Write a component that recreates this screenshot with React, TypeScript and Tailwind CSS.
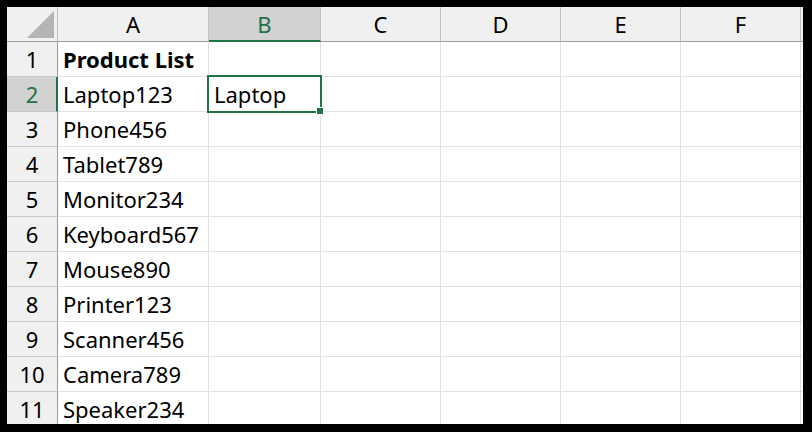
import clsx from "clsx";

const cn = clsx;

const columns = [
  { key: "A", width: "w-[151px]" },
  { key: "B", width: "w-[112px]" },
  { key: "C", width: "w-[120px]" },
  { key: "D", width: "w-[120px]" },
  { key: "E", width: "w-[120px]" },
  { key: "F", width: "w-[120px]" },
  // partly visible column past F, header text hidden by the frame
  { key: "G", width: "w-[120px]", hideLabel: true },
];

const rows: Record<string, string>[] = [
  { A: "Product List" },
  { A: "Laptop123", B: "Laptop" },
  { A: "Phone456" },
  { A: "Tablet789" },
  { A: "Monitor234" },
  { A: "Keyboard567" },
  { A: "Mouse890" },
  { A: "Printer123" },
  { A: "Scanner456" },
  { A: "Camera789" },
  { A: "Speaker234" },
];

const activeCol = "B";
const activeRow = 2;

export default function App() {
  return (
    <div className="w-[812px] h-[432px] bg-black pt-[7px] pl-[7px] pr-[9px] pb-[8px] font-['Noto_Sans',sans-serif] text-[22px] text-black">
      <div className="relative h-full w-full overflow-hidden bg-white">
        {/* Column headers */}
        <div className="flex h-[35px] shrink-0">
          <div className="flex w-[51px] shrink-0 items-end justify-end border-r border-b border-r-[#c0c0c0] border-b-[#9b9b9b] bg-[#f0f0f0] pb-[3px] pr-[2px]">
            <svg width="28" height="27" viewBox="0 0 28 27">
              <polygon points="27,0 27,27 0,27" fill="#b4b4b4" />
            </svg>
          </div>
          {columns.map((c) => {
            const active = c.key === activeCol;
            return (
              <div
                key={c.key}
                className={cn(
                  "flex shrink-0 items-center justify-center border-r border-r-[#c0c0c0] leading-none",
                  c.width,
                  active
                    ? "border-b-2 border-b-[#217346] bg-[#d2d2d2] pt-[1px] text-[#217346]"
                    : "border-b border-b-[#9b9b9b] bg-[#f0f0f0]"
                )}
              >
                {c.hideLabel ? "" : c.key}
              </div>
            );
          })}
        </div>

        {/* Rows */}
        {rows.map((row, i) => {
          const n = i + 1;
          const active = n === activeRow;
          return (
            <div key={n} className="flex h-[35px] shrink-0">
              <div
                className={cn(
                  "flex w-[51px] shrink-0 items-center justify-center border-b border-b-[#c8c8c8] leading-none",
                  active
                    ? "border-r-2 border-r-[#217346] bg-[#d2d2d2] pl-[1px] text-[#217346]"
                    : "border-r border-r-[#9b9b9b] bg-[#f0f0f0]"
                )}
              >
                {n}
              </div>
              {columns.map((c) => (
                <div
                  key={c.key}
                  className={cn(
                    "flex shrink-0 items-center whitespace-nowrap border-r border-b border-[#e1e1e1] pl-[5px] leading-none",
                    c.width,
                    n === 1 && c.key === "A" && "font-bold"
                  )}
                >
                  {row[c.key] ?? ""}
                </div>
              ))}
            </div>
          );
        })}

        {/* Active cell */}
        <div className="absolute left-[200px] top-[68px] h-[38px] w-[115px] border-2 border-[#217346]">
          <div className="absolute -bottom-[4px] -right-[4px] h-[8px] w-[8px] border border-white bg-[#217346]" />
        </div>
      </div>
    </div>
  );
}
